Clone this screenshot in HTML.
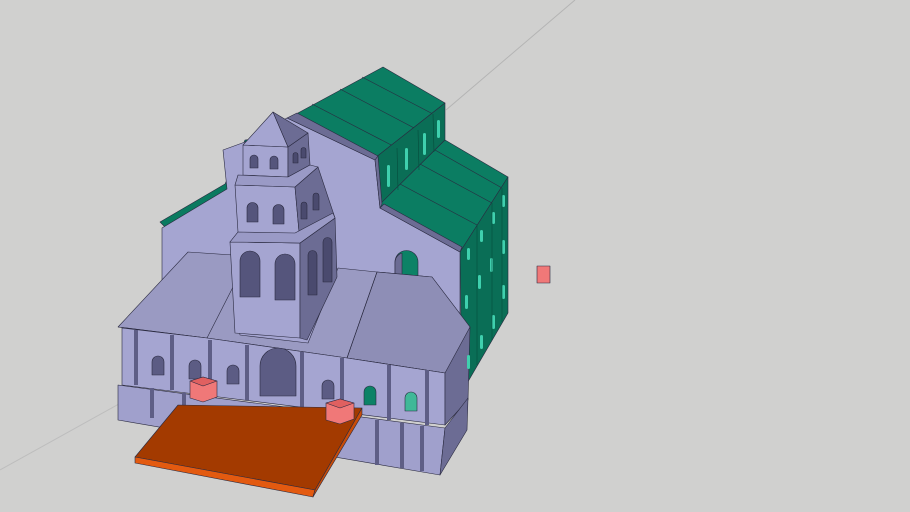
<!DOCTYPE html>
<html><head><meta charset="utf-8"><style>
html,body{margin:0;padding:0;background:#d0d0cf;}
svg{display:block;}
</style></head><body>
<svg width="910" height="512" viewBox="0 0 910 512" xmlns="http://www.w3.org/2000/svg" stroke-linejoin="round">
<rect width="910" height="512" fill="#d0d0cf"/>
<line x1="575" y1="0" x2="446" y2="110" stroke="#b4b4b4" stroke-width="1"/>
<line x1="0" y1="470" x2="135" y2="395" stroke="#bdbdbd" stroke-width="1"/>
<g stroke="#2a2a40" stroke-width="0.6">
<!-- left green roof sliver -->
<polygon points="160,222 225,184 245,140 262,138 240,196 170,232" fill="#0a7a60"/>
<polygon points="285,120 383,67 445,103 375,158" fill="#0b7d62"/>
<line x1="312" y1="104" x2="397" y2="148"/>
<line x1="340" y1="89" x2="418" y2="130"/>
<line x1="362" y1="77" x2="433" y2="114"/>
<polygon points="375,158 445,103 445,140 380,205" fill="#0a6e56"/>
<polygon points="377,207 445,140 508,177 460,252" fill="#0b7d62"/>
<line x1="400" y1="184" x2="477" y2="225"/>
<line x1="420" y1="164" x2="492" y2="203"/>
<line x1="435" y1="150" x2="502" y2="188"/>
<polygon points="460,252 508,177 508,313 462,392" fill="#0a6e56"/>
<polygon points="162,228 227,189 223,150 245,142 287,118 375,160 380,208 460,252 460,380 162,330" fill="#a5a5d1"/>
<polygon points="287,118 297,113 378,156 375,160" fill="#6c6c94"/>
<polygon points="375,160 378,156 382,204 380,208" fill="#6c6c94"/>
<polygon points="380,208 384,204 462,247 460,252" fill="#6c6c94"/>
<path d="M395,276 L395,262 A10,10 0 0 1 418,262 L418,276 Z" fill="#0c8266"/>
<path d="M395,276 L395,262 A10,10 0 0 1 402,253 L402,276 Z" fill="#6c6c94"/>
<polygon points="118,327 188,252 233,255 233,287 240,335 308,343 338,268 377,272 432,277 470,327 445,373 347,358 207,338" fill="#9a9ac2"/>
<polygon points="432,277 470,327 457,370 445,373 347,358 377,272" fill="#8e8eb6"/>
<line x1="118" y1="327" x2="207" y2="338"/>
<line x1="207" y1="338" x2="233" y2="287"/>
<line x1="377" y1="272" x2="347" y2="358"/>
<line x1="347" y1="358" x2="445" y2="373"/>
<polygon points="122,328 207,338 347,358 445,373 445,425 122,385" fill="#a5a5d1"/>
<polygon points="445,373 470,327 468,400 445,425" fill="#6c6c94"/>
<polygon points="118,385 445,428 440,475 118,420" fill="#a0a0cc"/>
<polygon points="445,428 468,398 467,430 440,475" fill="#6c6c94"/>
<g fill="#5e5e86" stroke="none">
<rect x="134" y="330" width="4" height="55"/>
<rect x="170" y="335" width="4" height="55"/>
<rect x="208" y="340" width="4" height="55"/>
<rect x="245" y="345" width="4" height="55"/>
<rect x="300" y="352" width="4" height="55"/>
<rect x="340" y="358" width="4" height="55"/>
<rect x="387" y="365" width="4" height="55"/>
<rect x="425" y="370" width="4" height="55"/>
<rect x="150" y="388" width="4" height="30"/>
<rect x="182" y="393" width="4" height="30"/>
<rect x="375" y="420" width="4" height="45"/>
<rect x="400" y="423" width="4" height="45"/>
<rect x="420" y="426" width="4" height="45"/>
</g>
<g fill="#5c5c84">
<path d="M152,375 v-13 a6,6 0 0 1 12,0 v13 z"/>
<path d="M189,379 v-13 a6,6 0 0 1 12,0 v13 z"/>
<path d="M227,384 v-13 a6,6 0 0 1 12,0 v13 z"/>
<path d="M260,396 v-30 a14,14 0 0 1 36,0 v30 z"/>
<path d="M322,399 v-13 a6,6 0 0 1 12,0 v13 z"/>
<path d="M364,405 v-13 a6,6 0 0 1 12,0 v13 z" fill="#0c8266"/>
<path d="M405,411 v-13 a6,6 0 0 1 12,0 v13 z" fill="#40b898"/>
</g>
<polygon points="230,242 300,243 300,338 235,333" fill="#a5a5d1"/>
<polygon points="300,243 335,218 337,277 307,340 300,338" fill="#6c6c94"/>
<polygon points="235,185 295,187 300,243 230,242 238,232" fill="#a5a5d1"/>
<polygon points="295,187 318,167 335,218 300,243" fill="#6c6c94"/>
<polygon points="243,145 288,147 288,177 243,175" fill="#a5a5d1"/>
<polygon points="288,147 308,133 310,165 288,177" fill="#6c6c94"/>
<polygon points="238,175 288,177 310,165 318,167 295,187 235,185" fill="#9a9ac6"/>
<polygon points="238,232 295,233 333,213 335,218 300,243 230,242" fill="#9a9ac6"/>
<polygon points="273,112 243,145 288,147" fill="#a5a5d1"/>
<polygon points="273,112 288,147 308,133" fill="#6c6c94"/>
<g fill="#55557c">
<path d="M250,168 v-9 a4,4 0 0 1 8,0 v9 z"/>
<path d="M270,169 v-9 a4,4 0 0 1 8,0 v9 z"/>
<path d="M293,163 v-8 a2.5,2.5 0 0 1 5,0 v8 z" fill="#4a4a6e"/>
<path d="M301,158 v-8 a2.5,2.5 0 0 1 5,0 v8 z" fill="#4a4a6e"/>
<path d="M247,222 v-14 a5,5 0 0 1 11,0 v14 z"/>
<path d="M273,224 v-14 a5,5 0 0 1 11,0 v14 z"/>
<path d="M301,219 v-14 a3,3 0 0 1 6,0 v14 z" fill="#4a4a6e"/>
<path d="M313,210 v-14 a3,3 0 0 1 6,0 v14 z" fill="#4a4a6e"/>
<path d="M240,297 v-36 a10,10 0 0 1 20,0 v36 z"/>
<path d="M275,300 v-36 a10,10 0 0 1 20,0 v36 z"/>
<path d="M308,295 v-40 a4,4 0 0 1 9,0 v40 z" fill="#4a4a6e"/>
<path d="M323,282 v-40 a4,4 0 0 1 9,0 v40 z" fill="#4a4a6e"/>
</g>
<g fill="#3fd0ae" stroke="none">
<rect x="387" y="165" width="3" height="22" rx="1.5"/>
<rect x="405" y="148" width="3" height="22" rx="1.5"/>
<rect x="423" y="133" width="3" height="22" rx="1.5"/>
<rect x="437" y="120" width="3" height="18" rx="1.5"/>
<rect x="467" y="248" width="3" height="12" rx="1.5"/>
<rect x="480" y="230" width="3" height="12" rx="1.5"/>
<rect x="492" y="212" width="3" height="12" rx="1.5"/>
<rect x="502" y="195" width="3" height="12" rx="1.5"/>
<rect x="465" y="295" width="3" height="14" rx="1.5"/>
<rect x="478" y="275" width="3" height="14" rx="1.5"/>
<rect x="490" y="258" width="3" height="14" rx="1.5"/>
<rect x="502" y="240" width="3" height="14" rx="1.5"/>
<rect x="467" y="355" width="3" height="14" rx="1.5"/>
<rect x="480" y="335" width="3" height="14" rx="1.5"/>
<rect x="492" y="315" width="3" height="14" rx="1.5"/>
<rect x="502" y="285" width="3" height="14" rx="1.5"/>
</g>
<g stroke="#064c3c" stroke-width="0.6">
<line x1="397" y1="148" x2="398" y2="190"/>
<line x1="418" y1="130" x2="419" y2="170"/>
<line x1="433" y1="114" x2="434" y2="152"/>
<line x1="477" y1="225" x2="477" y2="365"/>
<line x1="492" y1="203" x2="492" y2="340"/>
<line x1="502" y1="188" x2="502" y2="322"/>
</g>
<polygon points="135,457 178,405 362,408 315,490" fill="#a33a00"/>
<polygon points="135,457 315,490 313,497 135,463" fill="#e35a10"/>
<polygon points="315,490 362,408 362,415 313,497" fill="#c84c08"/>
<polygon points="190,381 203,377 217,381 217,397 203,402 190,398" fill="#f07878"/>
<polygon points="190,381 203,377 217,381 203,386" fill="#e06060"/>
<polygon points="326,403 340,399 354,403 354,419 340,424 326,420" fill="#f07878"/>
<polygon points="326,403 340,399 354,403 340,408" fill="#e06060"/>
<rect x="537" y="266" width="13" height="17" fill="#f07878"/>
</g>
</svg>
</body></html>
